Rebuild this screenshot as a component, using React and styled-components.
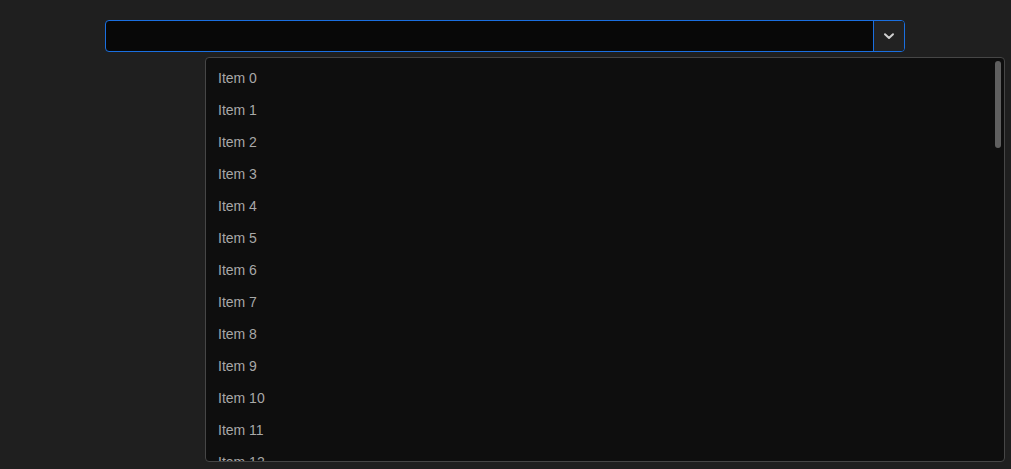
import styled, { createGlobalStyle } from "styled-components";

const GlobalStyle = createGlobalStyle`
  html, body {
    margin: 0;
    padding: 0;
    background: #1f1f1f;
    font-family: "Liberation Sans", Arial, sans-serif;
    height: 100%;
    overflow: hidden;
  }
`;

const items = Array.from({ length: 60 }, (_, i) => `Item ${i}`);

export default function App() {
  return (
    <>
      <GlobalStyle />
      <Page>
        <Combo>
          <Field>
            <Input type="text" />
            <Toggle aria-label="Open">
              <svg width="14" height="14" viewBox="0 0 14 14" fill="none">
                <path
                  d="M3 5.2 L7 9 L11 5.2"
                  stroke="#cfcfcf"
                  strokeWidth="2"
                  strokeLinecap="round"
                  strokeLinejoin="round"
                />
              </svg>
            </Toggle>
          </Field>
          <Menu>
            <List>
              {items.map((item) => (
                <Option key={item}>{item}</Option>
              ))}
            </List>
            <Thumb />
          </Menu>
        </Combo>
      </Page>
    </>
  );
}

const Page = styled.div`
  display: flex;
  justify-content: center;
  padding-top: 20px;
  padding-right: 1px;
`;

const Combo = styled.div`
  position: relative;
  width: 800px;
`;

const Field = styled.div`
  display: flex;
  height: 32px;
  box-sizing: border-box;
  border: 1px solid #1a6fe0;
  border-radius: 4px;
  background: #080808;
  overflow: hidden;
`;

const Input = styled.input`
  flex: 1;
  min-width: 0;
  border: none;
  outline: none;
  background: transparent;
  color: #ddd;
  font: inherit;
  font-size: 14px;
  padding: 0 10px;
`;

const Toggle = styled.button`
  width: 31px;
  display: flex;
  align-items: center;
  justify-content: center;
  border: none;
  border-left: 1px solid #1a6fe0;
  background: #222222;
  padding: 0;
  cursor: pointer;
`;

const Menu = styled.div`
  position: absolute;
  top: 37px;
  left: 100px;
  width: 800px;
  height: 405px;
  box-sizing: border-box;
  background: #0e0e0e;
  border: 1px solid #464646;
  border-radius: 4px;
  overflow: hidden;
`;

const List = styled.div`
  height: 100%;
  box-sizing: border-box;
  padding: 4px 0;
  overflow-y: auto;
  scrollbar-width: none;
`;

const Thumb = styled.div`
  position: absolute;
  top: 3px;
  right: 3px;
  width: 6px;
  height: 87px;
  border-radius: 3px;
  background: #5f5f5f;
`;

const Option = styled.div`
  height: 32px;
  display: flex;
  align-items: center;
  padding: 0 12px;
  font-size: 14px;
  color: #a8a8a8;
`;
